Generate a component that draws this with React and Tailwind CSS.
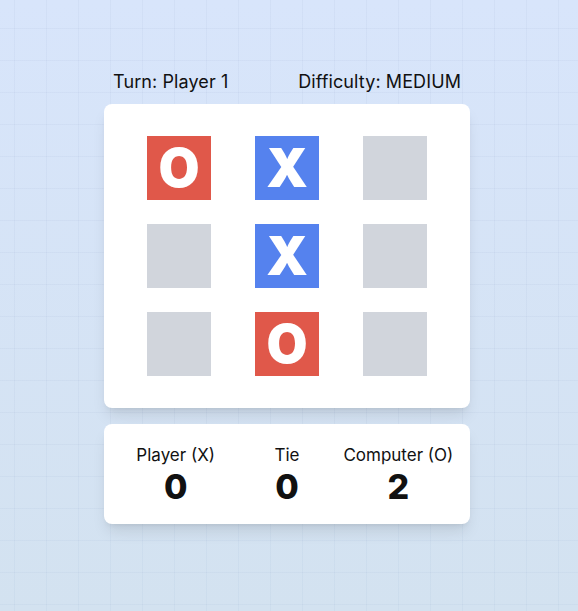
import React from "react";

const board = ["O", "X", "", "", "X", "", "", "O", ""];

const scores = [
  { label: "Player (X)", value: 0 },
  { label: "Tie", value: 0 },
  { label: "Computer (O)", value: 2 },
];

const Cell = ({ mark }) => {
  const color =
    mark === "X" ? "bg-[#5582ee]" : mark === "O" ? "bg-[#e0584a]" : "bg-gray-300";
  return (
    <div
      className={`w-16 h-16 flex items-center justify-center text-white text-[53px] font-black leading-none ${color}`}
    >
      {mark}
    </div>
  );
};

const App = () => {
  return (
    <div
      className="min-h-[611px] w-full flex flex-col items-center pt-[68px] pr-1 text-[#111] bg-[linear-gradient(to_right,rgba(160,180,210,0.12)_1px,transparent_1px),linear-gradient(to_bottom,rgba(160,180,210,0.12)_1px,transparent_1px),linear-gradient(to_bottom,#d8e5fb,#d3e2f0)] bg-[length:32px_32px,32px_32px,100%_100%] bg-[position:14px_28px,14px_28px,0_0]"
      style={{ fontFamily: "Inter, 'Noto Sans', sans-serif" }}
    >
      <div className="w-[366px]">
        <div className="flex justify-between px-[9px] text-lg leading-7 mb-2 tracking-[0.1px]">
          <span>Turn: Player 1</span>
          <span>Difficulty: MEDIUM</span>
        </div>

        <div className="bg-white rounded-lg shadow-lg px-[43px] py-8 grid grid-cols-3 gap-x-[44px] gap-y-6">
          {board.map((mark, i) => (
            <Cell key={i} mark={mark} />
          ))}
        </div>

        <div className="bg-white rounded-lg shadow-lg mt-4 px-4 pt-[19px] pb-[17px] grid grid-cols-3">
          {scores.map((s) => (
            <div key={s.label} className="flex flex-col items-center">
              <span className="text-[17px] leading-6">{s.label}</span>
              <span className="text-[34px] leading-[40px] font-extrabold">{s.value}</span>
            </div>
          ))}
        </div>
      </div>
    </div>
  );
};

export default App;
